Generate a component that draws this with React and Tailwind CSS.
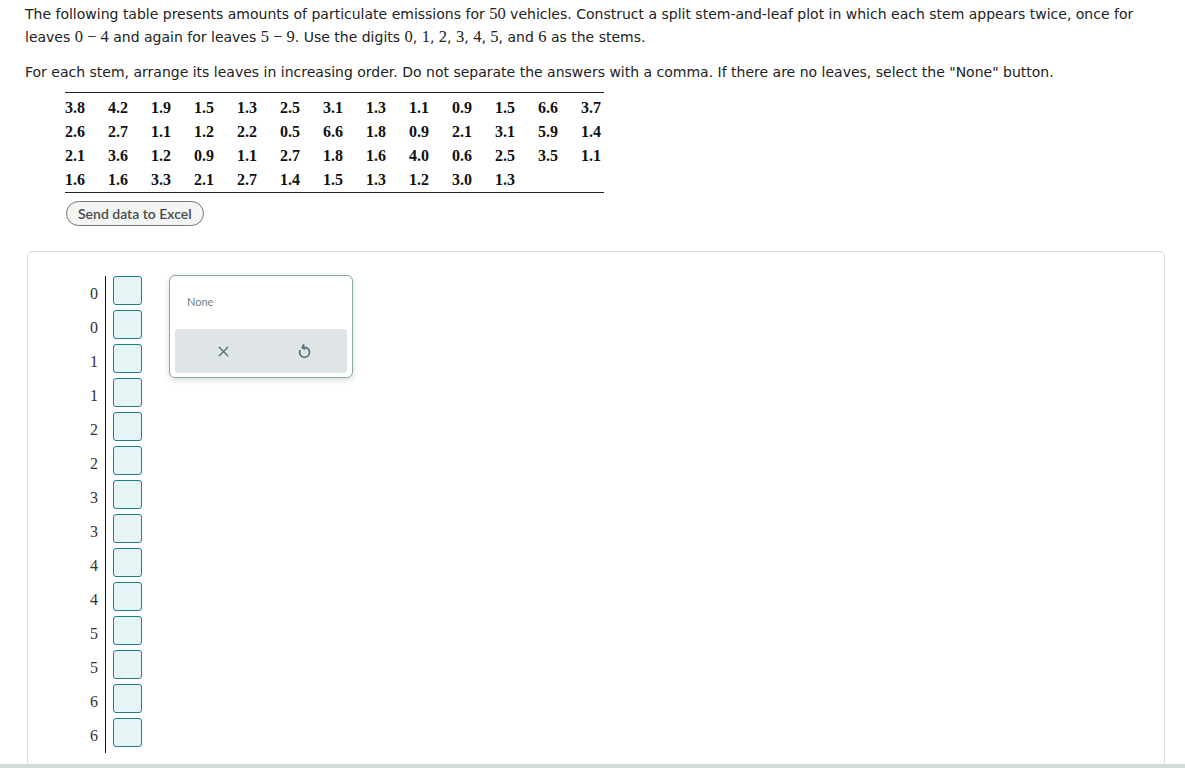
import { X } from "lucide-react"

const rows = [
  ["3.8", "4.2", "1.9", "1.5", "1.3", "2.5", "3.1", "1.3", "1.1", "0.9", "1.5", "6.6", "3.7"],
  ["2.6", "2.7", "1.1", "1.2", "2.2", "0.5", "6.6", "1.8", "0.9", "2.1", "3.1", "5.9", "1.4"],
  ["2.1", "3.6", "1.2", "0.9", "1.1", "2.7", "1.8", "1.6", "4.0", "0.6", "2.5", "3.5", "1.1"],
  ["1.6", "1.6", "3.3", "2.1", "2.7", "1.4", "1.5", "1.3", "1.2", "3.0", "1.3", "", ""],
]

const stems = ["0", "0", "1", "1", "2", "2", "3", "3", "4", "4", "5", "5", "6", "6"]

function M({ children }) {
  return <span className="font-['Liberation_Serif',serif] text-[16.5px] leading-[1]">{children}</span>
}

function UndoIcon() {
  return (
    <svg width="17" height="17" viewBox="0 0 24 24" fill="none" stroke="#466c78" strokeWidth="2.2" strokeLinecap="round" strokeLinejoin="round">
      <path d="M9.5 6.6 A7 7 0 1 1 5.6 10.5" />
      <path d="M11 2.5 L8.6 6.5 L12.4 8.6" />
    </svg>
  )
}

export default function App() {
  return (
    <div className="min-h-[768px] bg-white font-['DejaVu_Sans',sans-serif] text-[14px] text-[#222] overflow-hidden">
      <div className="pl-[25px] pr-[20px] pt-[3px]">
        <p className="leading-[23px]">
          The following table presents amounts of particulate emissions for <M>50</M> vehicles. Construct a split stem-and-leaf plot in which each stem appears twice, once for
          leaves <M>0 − 4</M> and again for leaves <M>5 − 9</M>. Use the digits <M>0</M>, <M>1</M>, <M>2</M>, <M>3</M>, <M>4</M>, <M>5</M>, and <M>6</M> as the stems.
        </p>
        <p className="mt-[12px] leading-[23px]">
          For each stem, arrange its leaves in increasing order. Do not separate the answers with a comma. If there are no leaves, select the "None" button.
        </p>

        <div className="ml-[40px] mt-[8px] w-[539px] border-t border-b border-[#222] pt-[3px]">
          {rows.map((r, i) => (
            <div key={i} className="flex h-[24px] items-center font-['Liberation_Serif',serif] font-bold text-[16px] text-[#111]">
              {r.map((v, j) => (
                <span key={j} className="w-[43px] shrink-0">{v}</span>
              ))}
            </div>
          ))}
        </div>

        <button className="ml-[41px] mt-[8px] block h-[25px] rounded-full border border-[#777] bg-[#f3f4f4] px-[11px] font-['Lato',sans-serif] text-[14px] font-semibold text-[#4a4a4a]">
          Send data to Excel
        </button>
      </div>

      <div className="ml-[27px] mr-[20px] mt-[25px] h-[513px] rounded-t-[5px] border border-b-0 border-[#d5dedf] pt-[24px]">
        <div className="flex items-start">
          <div className="flex">
            <div className="w-[71px] pt-[1px]">
              {stems.map((s, i) => (
                <div key={i} className="flex h-[34px] items-center justify-end pr-[1px] font-['Liberation_Serif',serif] text-[16px] text-[#333]">
                  {s}
                </div>
              ))}
            </div>
            <div className="ml-[6px] w-px bg-[#111]" />
            <div className="ml-[7px] flex flex-col gap-[5px]">
              {stems.map((s, i) => (
                <div key={i} className="h-[29px] w-[29px] rounded-[3px] border border-[#1b7f90] bg-[#e6f4f8]" />
              ))}
            </div>
          </div>

          <div className="ml-[27px] -mt-px w-[184px] rounded-[6px] border border-[#8fa3aa] bg-white px-[5px] pb-[4px] shadow-[0_2px_6px_rgba(0,0,0,0.15)]">
            <div className="pl-[12px] pt-[19px] pb-[20px] font-['Lato',sans-serif] text-[11px] leading-[14px] text-[#6b8189]">None</div>
            <div className="flex h-[44px] items-center rounded-[3px] bg-[#dfe5e7]">
              <div className="flex w-1/2 justify-center pl-[10px]">
                <X size={17} strokeWidth={1.8} color="#466c78" />
              </div>
              <div className="flex w-1/2 justify-center">
                <UndoIcon />
              </div>
            </div>
          </div>
        </div>
      </div>
      <div className="h-[5px] bg-[#d3dcdd]" />
    </div>
  )
}
